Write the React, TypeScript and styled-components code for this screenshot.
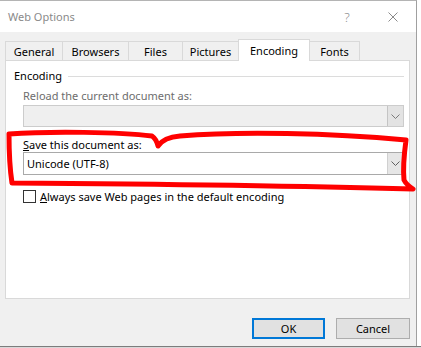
import React from "react";
import styled, { createGlobalStyle } from "styled-components";

const Global = createGlobalStyle`
  html, body { margin: 0; padding: 0; background: #ffffff; }
  body {
    width: 421px; height: 348px; overflow: hidden;
    font-family: "Noto Sans", "Open Sans", sans-serif;
    font-size: 11px;
    color: #000;
  }
  #root { width: 421px; height: 348px; }
`;

const Screen = styled.div`
  position: relative;
  width: 421px;
  height: 348px;
  display: flex;
  flex-direction: column;
  background: #ffffff;
`;

const Window = styled.div`
  width: 417px;
  height: 346px;
  box-sizing: border-box;
  border-top: 1px solid #b4b4b4;
  border-right: 1px solid #a0a0a0;
  display: flex;
  flex-direction: column;
  background: #f0f0f0;
`;

const BottomEdge = styled.div`
  height: 2px;
  border-top: 1px solid #7c7c7c;
  background: #d8d8d8;
  box-sizing: border-box;
`;

const TitleBar = styled.div`
  height: 31px;
  flex: none;
  background: #ffffff;
  display: flex;
  align-items: center;
  padding: 0 0 0 8px;
`;

const Title = styled.span`
  flex: 1;
  color: #8a8a8a;
  font-size: 11px;
  line-height: 16px;
`;

const TitleButton = styled.span`
  width: 46px;
  display: flex;
  align-items: center;
  justify-content: center;
  color: #8a8a8a;
  font-size: 13px;
  font-weight: 300;
`;

const Body = styled.div`
  flex: 1;
  display: flex;
  flex-direction: column;
  padding: 7px 6px 0 5px;
`;

const TabStrip = styled.div`
  position: relative;
  z-index: 1;
  height: 22px;
  margin-bottom: -1px;
  display: flex;
  align-items: flex-start;
`;

const Tab = styled.div<{ $w: number; $active?: boolean }>`
  box-sizing: border-box;
  width: ${(p) => p.$w}px;
  height: ${(p) => (p.$active ? 22 : 19)}px;
  margin-top: ${(p) => (p.$active ? 0 : 2)}px;
  margin-left: -1px;
  &:first-child { margin-left: 0; }
  border: 1px solid #d9d9d9;
  border-bottom: none;
  background: ${(p) => (p.$active ? "#ffffff" : "#f0f0f0")};
  display: flex;
  justify-content: center;
  padding-top: ${(p) => (p.$active ? 3 : 2)}px;
  line-height: 16px;
  font-size: 11px;
  color: #000;
  ${(p) => (p.$active ? "z-index: 2;" : "")}
`;

const Panel = styled.div`
  box-sizing: border-box;
  height: 239px;
  flex: none;
  background: #ffffff;
  border: 1px solid #d9d9d9;
  padding: 7px 5px 0 8px;
  display: flex;
  flex-direction: column;
`;

const GroupHeader = styled.div`
  display: flex;
  align-items: center;
  height: 16px;
  line-height: 16px;
`;

const GroupRule = styled.div`
  flex: 1;
  height: 1px;
  background: #dcdcdc;
  margin-left: 6px;
`;

const GroupBody = styled.div`
  display: flex;
  flex-direction: column;
  padding-left: 9px;
`;

const FieldLabel = styled.div<{ $disabled?: boolean; $gap: number }>`
  margin-top: ${(p) => p.$gap}px;
  line-height: 15px;
  height: 15px;
  color: ${(p) => (p.$disabled ? "#6d6d6d" : "#000")};
`;

const Combo = styled.div<{ $disabled?: boolean; $gap: number; $h: number }>`
  box-sizing: border-box;
  margin-top: ${(p) => p.$gap}px;
  height: ${(p) => p.$h}px;
  border: 1px solid ${(p) => (p.$disabled ? "#cccccc" : "#a9a9a9")};
  background: ${(p) => (p.$disabled ? "#efefef" : "#ffffff")};
  display: flex;
  align-items: stretch;
`;

const ComboValue = styled.div`
  flex: 1;
  padding-left: 3px;
  display: flex;
  align-items: center;
  line-height: 16px;
`;

const ComboButton = styled.div<{ $disabled?: boolean }>`
  width: 16px;
  box-sizing: border-box;
  border-left: 1px solid ${(p) => (p.$disabled ? "#c4c4c4" : "#d0d0d0")};
  background: ${(p) => (p.$disabled ? "#e3e3e3" : "#e6e6e6")};
  display: flex;
  align-items: center;
  justify-content: center;
`;

const CheckRow = styled.label`
  margin-top: 14px;
  display: flex;
  align-items: center;
  height: 15px;
  line-height: 15px;
`;

const CheckBox = styled.span`
  box-sizing: border-box;
  width: 13px;
  height: 13px;
  border: 1px solid #333333;
  background: #ffffff;
  margin-right: 4px;
`;

const Footer = styled.div`
  margin-top: 19px;
  display: flex;
  justify-content: flex-end;
  gap: 11px;
`;

const Button = styled.div<{ $w: number; $primary?: boolean }>`
  box-sizing: border-box;
  width: ${(p) => p.$w}px;
  height: 21px;
  background: #e1e1e1;
  border: ${(p) => (p.$primary ? "2px solid #0078d7" : "1px solid #adadad")};
  display: flex;
  align-items: center;
  justify-content: center;
  line-height: 16px;
`;

const Annotation = styled.svg`
  position: absolute;
  left: 0;
  top: 0;
  pointer-events: none;
`;

const Chevron = ({ color }: { color: string }) => (
  <svg width="9" height="5" viewBox="0 0 9 5">
    <path d="M0.5 0.5 L4.5 4.5 L8.5 0.5" fill="none" stroke={color} strokeWidth="1" />
  </svg>
);

const CloseIcon = () => (
  <svg width="10" height="10" viewBox="0 0 10 10">
    <path d="M0.5 0.5 L9.5 9.5 M9.5 0.5 L0.5 9.5" stroke="#8a8a8a" strokeWidth="1" />
  </svg>
);

const tabs = [
  { label: "General", w: 58 },
  { label: "Browsers", w: 67 },
  { label: "Files", w: 55 },
  { label: "Pictures", w: 57 },
  { label: "Encoding", w: 72, active: true },
  { label: "Fonts", w: 51 },
];

export default function App() {
  return (
    <Screen>
      <Global />
      <Window>
        <TitleBar>
          <Title>Web Options</Title>
          <TitleButton>?</TitleButton>
          <TitleButton>
            <CloseIcon />
          </TitleButton>
        </TitleBar>
        <Body>
          <TabStrip>
            {tabs.map((t) => (
              <Tab key={t.label} $w={t.w} $active={t.active}>
                {t.label}
              </Tab>
            ))}
          </TabStrip>
          <Panel>
            <GroupHeader>
              Encoding
              <GroupRule />
            </GroupHeader>
            <GroupBody>
              <FieldLabel $disabled $gap={4}>
                Reload the current document as:
              </FieldLabel>
              <Combo $disabled $gap={2} $h={22}>
                <ComboValue />
                <ComboButton $disabled>
                  <Chevron color="#7a7a7a" />
                </ComboButton>
              </Combo>
              <FieldLabel $gap={10}>
                <u>S</u>ave this document as:
              </FieldLabel>
              <Combo $gap={0} $h={23}>
                <ComboValue>Unicode (UTF-8)</ComboValue>
                <ComboButton>
                  <Chevron color="#606060" />
                </ComboButton>
              </Combo>
              <CheckRow>
                <CheckBox />
                <span>
                  <u>A</u>lways save Web pages in the default encoding
                </span>
              </CheckRow>
            </GroupBody>
          </Panel>
          <Footer>
            <Button $w={73} $primary>
              OK
            </Button>
            <Button $w={74}>Cancel</Button>
          </Footer>
        </Body>
      </Window>
      <BottomEdge />
      <Annotation width="421" height="348" viewBox="0 0 421 348">
        <path
          d="M9 134 C 50 131 120 132 152 136 C 155 138 157 142 158 146 C 162 140 168 137 180 136 C 240 131 330 133 406 140 C 404 155 403 170 404 180 C 406 184 410 187 413 189 C 300 186 150 184 12 183 C 10 170 9 150 9 134"
          fill="none"
          stroke="#ff0000"
          strokeWidth="5"
          strokeLinecap="round"
          strokeLinejoin="round"
        />
      </Annotation>
    </Screen>
  );
}
